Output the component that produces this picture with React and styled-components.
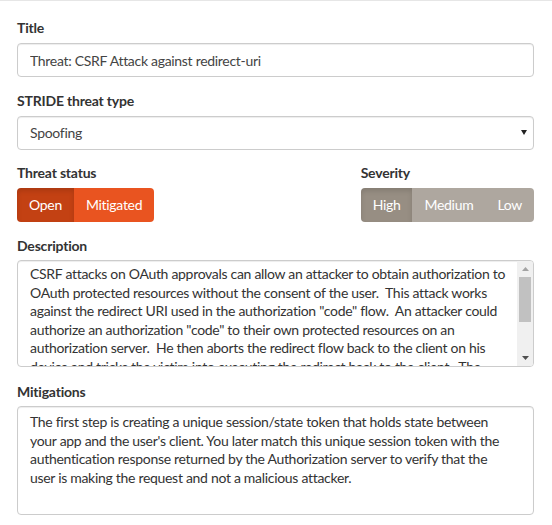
import React from "react";
import styled, { createGlobalStyle } from "styled-components";

const GlobalStyle = createGlobalStyle`
  html, body {
    margin: 0;
    padding: 0;
    background: #fff;
  }
  body {
    font-family: Lato, "Open Sans", sans-serif;
    font-size: 14px;
    line-height: 20px;
    letter-spacing: -0.3px;
    color: #333;
  }
  * {
    box-sizing: border-box;
  }
`;

const Page = styled.div`
  border-top: 1px solid #e6e6e6;
  padding: 17px 18px 0 17px;
`;

const FormGroup = styled.div`
  margin-bottom: ${(p) => p.$gap || 15}px;
`;

const Label = styled.label`
  display: block;
  font-weight: bold;
  letter-spacing: -0.2px;
  margin-bottom: ${(p) => p.$gap || 5}px;
`;

const TextInput = styled.input`
  display: block;
  width: 100%;
  height: 34px;
  padding: 6px 12px;
  font: inherit;
  letter-spacing: inherit;
  color: #444;
  border: 1px solid #ccc;
  border-radius: 4px;
  box-shadow: inset 0 1px 1px rgba(0, 0, 0, 0.075);
`;

const SelectWrap = styled.div`
  position: relative;
`;

const Select = styled.select`
  display: block;
  width: 100%;
  height: 34px;
  padding: 6px 12px;
  font: inherit;
  letter-spacing: inherit;
  color: #444;
  background: #fff;
  border: 1px solid #ccc;
  border-radius: 4px;
  appearance: none;
  box-shadow: inset 0 1px 1px rgba(0, 0, 0, 0.075);
`;

const Caret = styled.span`
  position: absolute;
  right: 7px;
  top: 14px;
  width: 0;
  height: 0;
  border-left: 3px solid transparent;
  border-right: 3px solid transparent;
  border-top: 5px solid #222;
  pointer-events: none;
`;

const StatusRow = styled.div`
  display: flex;
  justify-content: space-between;
  align-items: flex-start;
  margin-bottom: 14px;
`;

const ButtonGroup = styled.div`
  display: inline-flex;
`;

const palette = {
  primary: { base: "#e95420", active: "#c34113" },
  default: { base: "#aea79f", active: "#978e83" },
};

const ToggleButton = styled.button`
  height: 34px;
  padding: 6px 12px;
  font: inherit;
  letter-spacing: inherit;
  color: #fff;
  border: none;
  background: ${(p) =>
    p.$active ? palette[p.$kind].active : palette[p.$kind].base};
  box-shadow: ${(p) =>
    p.$active ? "inset 0 3px 5px rgba(0, 0, 0, 0.125)" : "none"};
  cursor: pointer;

  &:first-child {
    border-radius: 4px 0 0 4px;
  }
  &:last-child {
    border-radius: 0 4px 4px 0;
  }
`;

const AreaWrap = styled.div`
  position: relative;
`;

const TextArea = styled.textarea`
  display: block;
  width: 100%;
  height: ${(p) => p.$height}px;
  padding: ${(p) => p.$top || 6}px ${(p) => (p.$scroll ? 29 : 12)}px 6px 12px;
  font: inherit;
  line-height: 18.5px;
  letter-spacing: inherit;
  color: #333;
  border: 1px solid #ccc;
  border-radius: 4px;
  resize: none;
  overflow: hidden;
  white-space: pre;
  box-shadow: inset 0 1px 1px rgba(0, 0, 0, 0.075);
`;

/* the browser hides native scrollbars, so the description's bar is drawn */
const ScrollTrack = styled.div`
  position: absolute;
  top: 1px;
  right: 1px;
  bottom: 1px;
  width: 16px;
  display: flex;
  flex-direction: column;
  align-items: center;
  background: #f0f0f0;
  border-radius: 0 3px 3px 0;
  pointer-events: none;
`;

const ScrollArrow = styled.div`
  height: 16px;
  display: flex;
  align-items: center;
  justify-content: center;
`;

const ScrollThumb = styled.div`
  width: 12px;
  height: 45px;
  background: #c1c1c1;
`;

const Spacer = styled.div`
  flex: 1;
`;

const Arrow = ({ up, color }) => (
  <svg width="7" height="4" viewBox="0 0 7 4">
    <path d={up ? "M0 4 L3.5 0 L7 4 Z" : "M0 0 L3.5 4 L7 0 Z"} fill={color} />
  </svg>
);

const description = [
  "CSRF attacks on OAuth approvals can allow an attacker to obtain authorization to",
  "OAuth protected resources without the consent of the user.  This attack works",
  'against the redirect URI used in the authorization "code" flow.  An attacker could',
  'authorize an authorization "code" to their own protected resources on an',
  "authorization server.  He then aborts the redirect flow back to the client on his",
  "device and tricks the victim into executing the redirect back to the client.  The",
  "client receives the code and exchanges it for an access token linked to the",
  "attacker.",
].join("\n");

const mitigations = [
  "The first step is creating a unique session/state token that holds state between",
  "your app and the user's client. You later match this unique session token with the",
  "authentication response returned by the Authorization server to verify that the",
  "user is making the request and not a malicious attacker.",
].join("\n");

export default function App() {
  return (
    <>
      <GlobalStyle />
      <Page>
        <FormGroup $gap={14}>
          <Label>Title</Label>
          <TextInput defaultValue="Threat: CSRF Attack against redirect-uri" />
        </FormGroup>

        <FormGroup $gap={13}>
          <Label>STRIDE threat type</Label>
          <SelectWrap>
            <Select defaultValue="Spoofing">
              <option>Spoofing</option>
              <option>Tampering</option>
              <option>Repudiation</option>
              <option>Information disclosure</option>
              <option>Denial of service</option>
              <option>Elevation of privilege</option>
            </Select>
            <Caret />
          </SelectWrap>
        </FormGroup>

        <StatusRow>
          <div>
            <Label>Threat status</Label>
            <ButtonGroup>
              <ToggleButton $kind="primary" $active>
                Open
              </ToggleButton>
              <ToggleButton $kind="primary">Mitigated</ToggleButton>
            </ButtonGroup>
          </div>
          <div>
            <Label>Severity</Label>
            <ButtonGroup>
              <ToggleButton $kind="default" $active>
                High
              </ToggleButton>
              <ToggleButton $kind="default">Medium</ToggleButton>
              <ToggleButton $kind="default">Low</ToggleButton>
            </ButtonGroup>
          </div>
        </StatusRow>

        <FormGroup>
          <Label $gap={4}>Description</Label>
          <AreaWrap>
            <TextArea
              $height={107}
              $top={4}
              $scroll
              wrap="off"
              defaultValue={description}
            />
            <ScrollTrack>
              <ScrollArrow>
                <Arrow up color="#a3a3a3" />
              </ScrollArrow>
              <ScrollThumb />
              <Spacer />
              <ScrollArrow>
                <Arrow color="#505050" />
              </ScrollArrow>
            </ScrollTrack>
          </AreaWrap>
        </FormGroup>

        <FormGroup>
          <Label $gap={4}>Mitigations</Label>
          <TextArea $height={109} wrap="off" defaultValue={mitigations} />
        </FormGroup>
      </Page>
    </>
  );
}
